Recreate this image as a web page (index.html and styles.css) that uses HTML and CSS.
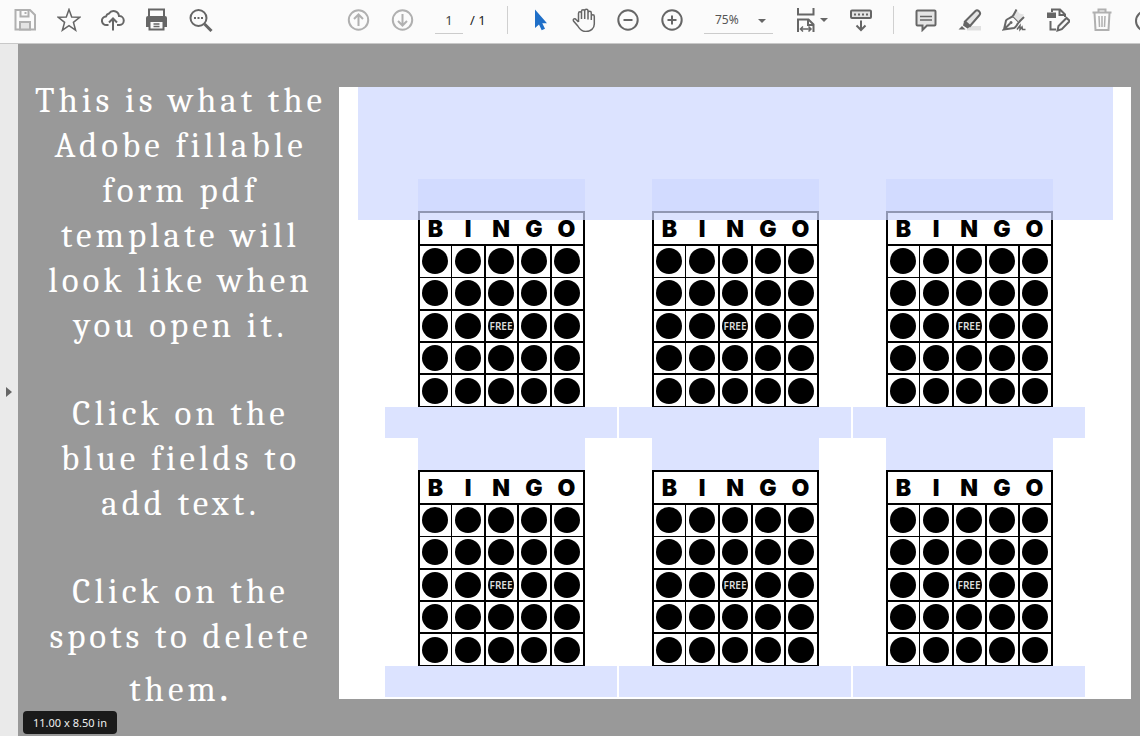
FILE: index.html
```html
<!DOCTYPE html>
<html lang="en">
  <head>
    <meta charset="UTF-8" />
    <meta name="viewport" content="width=device-width, initial-scale=1.0" />
    <title>Bingo template</title>
    <link rel="stylesheet" href="styles.css">
  </head>

  <body>
    <header class="toolbar">
      <div class="group">
        <button class="tool off" aria-label="Save">
          <svg viewBox="0 0 24 24"><path d="M3 2h14l5 5v14.500H2.500V2z" /><path d="M7.500 2v6.500h8V2M12.500 4v2" /><path class="tint" d="M7 14h10v7.500H7z" /></svg>
        </button>
        <button class="tool" aria-label="Star">
          <svg viewBox="0 0 24 24"><path class="thin" d="M12 1.500l2.700 7.600 8 .2-6.300 5 2.200 7.900-6.600-4.600-6.600 4.600 2.200-7.900-6.300-5 8-.2z" /></svg>
        </button>
        <button class="tool" aria-label="Upload">
          <svg viewBox="0 0 24 24"><path d="M7.500 17H5.500a4.300 4.300 0 0 1-.5-8.600A4 4 0 0 1 8 5.500 5.500 5.500 0 0 1 18 8a4.500 4.500 0 0 1 .5 9H16" /><path d="M12 22.500V11M8 14.500l4-4 4 4" /></svg>
        </button>
        <button class="tool" aria-label="Print">
          <svg viewBox="0 0 24 24"><path class="solid" d="M1 10a2 2 0 0 1 2-2h17a2 2 0 0 1 2 2v9H1z" /><path class="paper" d="M4 8V1.500h15V8M4.500 13h14v8.500h-14z" /><path class="thin" d="M8.500 16h6M8.500 18.500h6" /></svg>
        </button>
        <button class="tool" aria-label="Find">
          <svg viewBox="0 0 24 24"><circle cx="9.500" cy="10" r="8" /><path class="thick" d="M15.500 16l7 7" /><path class="solid" d="M5 9h2v2H5zM8.500 9h2v2h-2zM12 9h2v2h-2z" /></svg>
        </button>
      </div>

      <div class="group pages">
        <button class="tool off" aria-label="Previous page">
          <svg viewBox="0 0 24 24"><circle cx="12.500" cy="12" r="9.700" /><path d="M12.500 18V7M8 11l4.500-4.500L17 11" /></svg>
        </button>
        <button class="tool off" aria-label="Next page">
          <svg viewBox="0 0 24 24"><circle cx="12.500" cy="12" r="9.700" /><path d="M12.500 6v11M8 13l4.500 4.500L17 13" /></svg>
        </button>
        <input class="page-no" type="text" value="1" aria-label="Page number">
        <span class="total">/ 1</span>
      </div>

      <div class="group split">
        <button class="tool" aria-label="Select">
          <svg viewBox="0 0 24 24"><path class="cursor" d="M7 1.500v18.500l4-3.500 2.700 5.800 3.300-1.500-2.700-5.600H19z" /></svg>
        </button>
        <button class="tool" aria-label="Hand">
          <svg viewBox="0 0 24 24"><path class="thin" d="M6.500 14V5.500c0-2.200 3-2.200 3 0V11M9.500 11V3.500c0-2.200 3.200-2.200 3.200 0V11M12.700 11V3c0-2.200 3.300-2.200 3.300 0v8.500M16 11.500V5c0-2.200 3.300-2.200 3.300 0v7M19.300 8.500c0-2.200 3-2.200 3 0V16c0 4.500-3.500 7.500-8.500 7.500-4 0-6-2-8-5.500L1.500 13c-1-2 1.500-3 2.500-1.500L6.500 14" /></svg>
        </button>
        <button class="tool" aria-label="Zoom out">
          <svg viewBox="0 0 24 24"><circle cx="12" cy="12" r="9.700" /><path d="M7.500 12h9" /></svg>
        </button>
        <button class="tool" aria-label="Zoom in">
          <svg viewBox="0 0 24 24"><circle cx="12" cy="12" r="9.700" /><path d="M7.500 12h9M12 7.500v9" /></svg>
        </button>
        <label class="zoom">
          <select aria-label="Zoom level">
            <option>75%</option>
            <option>100%</option>
          </select>
          <i class="caret"></i>
        </label>
        <button class="tool fit" aria-label="Page fit">
          <svg viewBox="0 0 24 24"><path d="M4 0v6.500h15.500V0M4 24V11.500h10.500l5 5V24M14 11.500V17h5.500" /><path class="thin" d="M7 21h9.500M9 18.500L6.500 21 9 23.500M14.500 18.500L17 21l-2.500 2.500" /></svg>
          <i class="caret"></i>
        </button>
        <button class="tool" aria-label="Scroll mode">
          <svg viewBox="0 0 24 24"><rect class="tint" x="2" y="2.500" width="20" height="7.500" rx="1" /><path class="solid" d="M5 5.500h2v2H5zM9 5.500h2v2H9zM13 5.500h2v2h-2zM17 5.500h2v2h-2z" /><path d="M12 12.500v9M7.500 17.500l4.500 4.500 4.500-4.500" /></svg>
        </button>
      </div>

      <div class="group split">
        <button class="tool" aria-label="Comment">
          <svg viewBox="0 0 24 24"><path class="tint" d="M3.500 2.500h17a1 1 0 0 1 1 1v13a1 1 0 0 1-1 1H13l-4.500 4.500v-4.500h-5a1 1 0 0 1-1-1v-13a1 1 0 0 1 1-1z" /><path class="thin" d="M6 8.500h12M6 12h12" /></svg>
        </button>
        <button class="tool" aria-label="Highlight">
          <svg viewBox="0 0 24 24"><path class="shade" d="M9 18h14v4.500H9z" /><path class="tint" d="M7 13.500L17.500 3c2-2 6 1.500 4 4L12 18z" /><path class="solid" d="M6 13.500l6.500 5-3 2-4.500-3zM4 18l3.500 3.500H.5z" /></svg>
        </button>
        <button class="tool" aria-label="Sign">
          <svg viewBox="0 0 24 24"><path d="M2 21.500L4 12.500c1-2 5-2.500 7-4.500l6 6c-2 2-2.500 5-5 6L2 21.500l6-6" /><path class="tint" d="M11 8l3.500-6 3 3.500 4.500 1-5 7.500z" stroke="none" /><path d="M11 8l3.500-6.500M17 14l5-5" /><path class="thin" d="M15 21.500l3-4v4l2-2.500.5 2.500h3" /><circle class="solid" cx="9" cy="14.500" r="1.500" /></svg>
        </button>
        <button class="tool" aria-label="Edit pages">
          <svg viewBox="0 0 24 24"><path d="M6 4V1.500h8l5 5V9M13.500 2v5H19M4.500 13v8.500H10" /><path class="solid" d="M1 4.500h9V10H1z" /><path class="paper" d="M11.500 22.500l1-4.500 8-8 3.300 3-8 8.200z" /></svg>
        </button>
        <button class="tool off" aria-label="Delete">
          <svg viewBox="0 0 24 24"><path d="M2.500 4.500h19M8.500 4V1.500h7V4M4.500 5l1 17h13l1-17" /><path class="thin" d="M9 8l.5 11M12 8v11M15 8l-.5 11" /></svg>
        </button>
        <button class="tool" aria-label="Rotate">
          <svg viewBox="0 0 24 24"><circle cx="12" cy="13" r="10" /></svg>
        </button>
      </div>
    </header>

    <main class="viewer">
      <aside class="rail">
        <button aria-label="Open side panel"></button>
      </aside>

      <section class="note">
        <p>This is what the<br>Adobe fillable<br>form pdf<br>template will<br>look like when<br>you open it.</p>
        <p>Click on the<br>blue fields to<br>add text.</p>
        <p>Click on the<br>spots to delete<span class="last">them<b>.</b></span></p>
      </section>

      <form class="sheet">
        <input class="field title" type="text" aria-label="Title">
        <div class="cards"></div>
      </form>

      <div class="size">11.00 x 8.50 in</div>
    </main>

    <script>
      var oCards = document.querySelector(".cards");
      var html = "";

      for (var n = 1; n <= 6; n++) {
        html += '<div class="card">';
        html += '<input class="field name" type="text" aria-label="Card ' + n + ' name">';
        html += "<table><thead><tr><th>B</th><th>I</th><th>N</th><th>G</th><th>O</th></tr></thead><tbody>";
        for (var r = 0; r < 5; r++) {
          html += "<tr>";
          for (var c = 0; c < 5; c++) {
            var free = r == 2 && c == 2;
            html += '<td><button type="button" class="spot" aria-label="' + (free ? "FREE" : "Spot") + '">' + (free ? "FREE" : "") + "</button></td>";
          }
          html += "</tr>";
        }
        html += "</tbody></table>";
        html += '<input class="field foot" type="text" aria-label="Card ' + n + ' footer">';
        html += "</div>";
      }
      oCards.innerHTML = html;

      // a click removes the spot
      oCards.addEventListener("click", function(e) {
        if (e.target.className == "spot") {
          e.target.style.visibility = "hidden";
        }
      });
    </script>
  </body>
</html>
```
FILE: styles.css
```css
* {
  margin: 0;
  padding: 0;
  box-sizing: border-box;
}

body {
  display: flex;
  flex-direction: column;
  min-height: 100vh;
  background-color: #999;
  font-family: "Noto Sans", "Open Sans", sans-serif;
  overflow-x: hidden;
}

button,
input,
select {
  border: 0;
  background: none;
  font-family: inherit;
}

button {
  cursor: pointer;
}

/* toolbar */
.toolbar {
  display: flex;
  height: 44px;
  padding: 0 0 3px 3px;
  border-bottom: 1px solid #c8c8c8;
  background-color: #fbfbfb;
  overflow: hidden;
}

.group {
  display: flex;
  flex: none;
  align-items: center;
}

.pages {
  margin-left: 113px;
}

.split {
  position: relative;
  margin-left: 10px;
  padding-left: 11px;
}

.split::before {
  content: "";
  position: absolute;
  left: 0;
  top: 6px;
  bottom: 6px;
  width: 1px;
  background-color: #d0d0d0;
}

.tool {
  display: flex;
  flex: none;
  align-items: center;
  justify-content: center;
  width: 44px;
  height: 40px;
  color: #666;
}

.tool.off {
  color: #b0b0b0;
}

.tool svg {
  width: 24px;
  height: 24px;
  fill: none;
  stroke: currentColor;
  stroke-width: 2;
}

.tool .thin {
  stroke-width: 1.5;
}

.tool .thick {
  stroke-width: 3;
}

.tool .solid {
  fill: currentColor;
  stroke: none;
}

.tool .tint {
  fill: #e4e4e4;
}

.tool .paper {
  fill: #fbfbfb;
}

.tool .shade {
  fill: #e0e0e0;
  stroke: none;
}

.tool .cursor {
  fill: #1f6fc8;
  stroke: none;
}

.page-no {
  width: 28px;
  height: 28px;
  margin-left: 11px;
  border-bottom: 1px solid #ccc;
  text-align: center;
  font-size: 13px;
  color: #444;
}

.total {
  width: 34px;
  padding-left: 7px;
  font-size: 13px;
  color: #222;
}

.zoom {
  position: relative;
  width: 69px;
  margin-left: 10px;
}

.zoom select {
  width: 100%;
  height: 28px;
  padding-left: 11px;
  border-bottom: 1px solid #ccc;
  font-size: 12px;
  color: #555;
  appearance: none;
}

.caret {
  border: 4px solid transparent;
  border-top-color: #666;
  border-bottom: 0;
}

.zoom .caret {
  position: absolute;
  right: 7px;
  top: 13px;
}

.fit {
  gap: 2px;
  width: 66px;
  padding-left: 10px;
}

/* document */
.viewer {
  position: relative;
  flex: 1;
  display: grid;
  grid-template-columns: 18px minmax(0, 15fr) minmax(0, 37fr);
  align-items: start;
  padding-right: 9px;
}

.rail {
  display: flex;
  align-self: stretch;
  align-items: center;
  padding-top: 4px;
  background-color: #eaeaea;
}

.rail button {
  margin-left: 6px;
  border: 5px solid transparent;
  border-left: 6px solid #666;
  border-right: 0;
}

.note {
  padding: 34px 0 0 4px;
  text-align: center;
  font-family: Cambria, "Liberation Serif", serif;
  font-size: 35px;
  line-height: 45px;
  letter-spacing: 4px;
  color: #fff;
  white-space: nowrap;
}

.note p + p {
  margin-top: 43px;
}

.note .last {
  display: block;
  line-height: 61px;
}

.sheet {
  position: relative;
  margin-top: 43px;
  padding: 92px 46px 2px;
  background-color: #fff;
}

.field {
  display: block;
  background-color: #dce3ff;
  text-align: center;
  font-size: 14px;
}

/* lies over the top edge of the first row of cards */
.title {
  position: absolute;
  z-index: 1;
  top: 0;
  left: 19px;
  width: calc(100% - 37px);
  height: 133px;
  background-color: rgba(205, 215, 255, 0.7);
  font-size: 40px;
}

.cards {
  display: grid;
  grid-template-columns: repeat(3, 1fr);
  column-gap: 2px;
}

.card {
  display: flex;
  flex-direction: column;
  align-items: center;
}

.name {
  width: 72%;
  height: 32px;
}

.foot {
  width: 100%;
  height: 31px;
}

.card table {
  width: 72%;
  height: 196px;
  border: 2px solid #000;
  border-bottom: 1px solid #777b8c;
  border-collapse: collapse;
  table-layout: fixed;
}

.card th {
  height: 33px;
  border-bottom: 2px solid #000;
  font-family: Inter, "Liberation Sans", sans-serif;
  font-size: 23px;
  font-weight: 900;
  line-height: 30px;
}

.card td {
  height: 32px;
  border: 1px solid #000;
  vertical-align: middle;
}

.card td:nth-child(n + 3) {
  border-left-width: 2px;
}

.card tr:nth-child(n + 3) td {
  border-top-width: 2px;
}

.spot {
  display: block;
  width: 26px;
  height: 26px;
  margin: 0 auto;
  border-radius: 50%;
  background-color: #000;
  text-align: center;
  font-size: 10px;
  font-weight: 600;
  line-height: 26px;
  color: #ddd;
}

.size {
  position: absolute;
  left: 23px;
  bottom: 2px;
  padding: 0 10px;
  border-radius: 4px;
  background-color: #1a1a1a;
  font-size: 11px;
  line-height: 23px;
  color: #eee;
}
```
